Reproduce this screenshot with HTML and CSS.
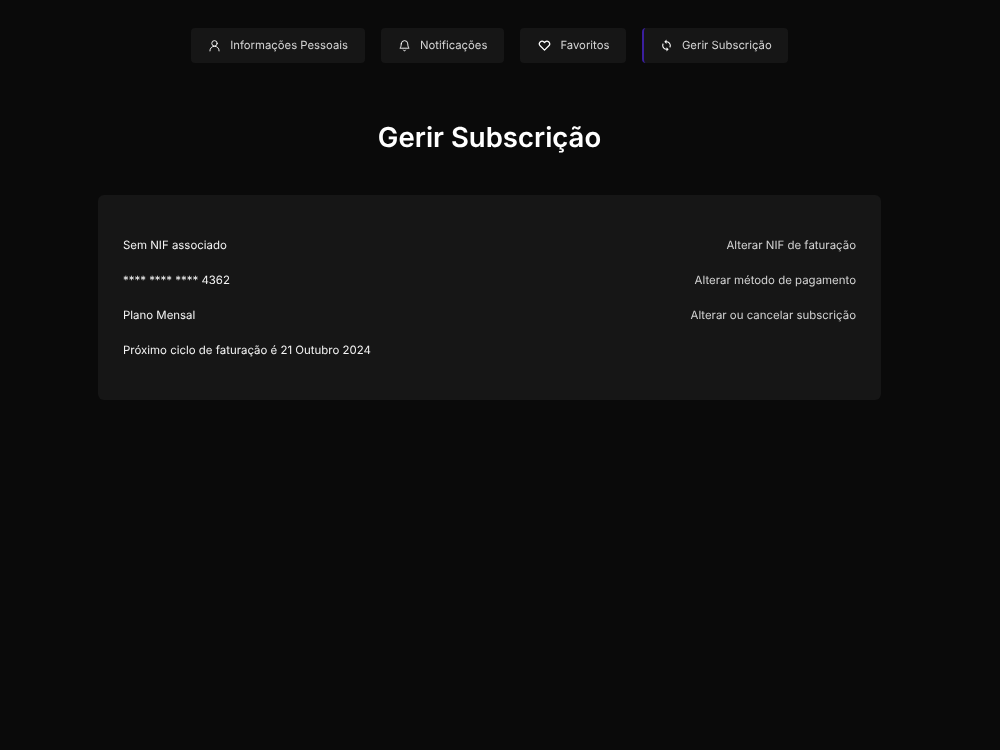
FILE: index.html
```html
<!DOCTYPE html>
<html lang="pt">
<head>
<meta charset="utf-8">
<title>Gerir Subscrição</title>
<link rel="stylesheet" href="styles.css">
</head>
<body>
<div class="page">
  <nav class="tabs">
    <a class="tab tab-first" href="#"><svg class="icon" viewBox="0 0 24 24"><circle cx="12" cy="8" r="5"/><path d="M3.500 22c0-5 3.500-8.500 8.500-8.500s8.500 3.500 8.500 8.500"/></svg>Informações Pessoais</a>
    <a class="tab tab-narrow" href="#"><svg class="icon" viewBox="0 0 24 24"><path d="M6 9a6 6 0 0 1 12 0c0 6 2.500 8 2.500 8h-17S6 15 6 9z"/><path d="M10 20.500a2.200 2.200 0 0 0 4 0"/></svg>Notificações</a>
    <a class="tab tab-wide" href="#"><svg class="icon icon-heart" viewBox="0 0 24 24"><path d="M12 20.500 4 12.500a5 5 0 0 1 0-7 5 5 0 0 1 7 0l1 1 1-1a5 5 0 0 1 7 0 5 5 0 0 1 0 7z"/></svg>Favoritos</a>
    <a class="tab tab-active" href="#"><svg class="icon icon-solid" viewBox="0 0 24 24"><path d="M12 4V1L8 5l4 4V6c3.310 0 6 2.690 6 6 0 1.010-.25 1.970-.7 2.800l1.460 1.460C19.540 15.030 20 13.570 20 12c0-4.420-3.580-8-8-8zm0 14c-3.310 0-6-2.690-6-6 0-1.010.25-1.970.7-2.800L5.240 7.740C4.460 8.970 4 10.430 4 12c0 4.420 3.580 8 8 8v3l4-4-4-4v3z"/></svg>Gerir Subscrição</a>
  </nav>
  <h1 class="title">Gerir Subscrição</h1>
  <section class="card">
    <div class="col">
      <p>Sem NIF associado</p>
      <p>**** **** **** 4362</p>
      <p>Plano Mensal</p>
      <p>Próximo ciclo de faturação é 21 Outubro 2024</p>
    </div>
    <div class="col col-right">
      <a href="#">Alterar NIF de faturação</a>
      <a href="#">Alterar método de pagamento</a>
      <a href="#">Alterar ou cancelar subscrição</a>
    </div>
  </section>
</div>
</body>
</html>
```
FILE: styles.css
```css
* { box-sizing: border-box; }
html, body { margin: 0; height: 100%; }
body {
  background: #0a0a0a;
  color: #f4f4f4;
  font-family: Inter, "Liberation Sans", sans-serif;
  font-size: 11.450px;
  line-height: 15px;
  text-rendering: geometricPrecision;
  overflow: hidden;
}
.page { width: 979px; height: 750px; padding-top: 28px; will-change: transform; }
.tabs { display: flex; justify-content: center; gap: 16px; }
.tab {
  display: flex;
  align-items: center;
  gap: 9px;
  height: 35px;
  padding: 0 16.500px 0 17.500px;
  border-radius: 4px;
  background: #161616;
  color: #d4d4d4;
  font-size: 11.320px;
  text-decoration: none;
}
.tab-first { padding-right: 17.500px; }
.tab-narrow { padding-left: 16.500px; }
.tab-wide { padding-left: 18.500px; }
.tab-active { border-left: 2px solid #3b1f9e; padding-left: 16px; }
.icon {
  width: 13px;
  height: 13px;
  fill: none;
  stroke: #fff;
  stroke-width: 1.700;
  stroke-linecap: round;
  stroke-linejoin: round;
  flex: none;
}
.icon-heart { stroke-width: 2.300; }
.icon-solid { fill: #fff; stroke: none; }
.title {
  margin: 57px 0 41px;
  text-align: center;
  font-size: 27.500px;
  line-height: 34px;
  font-weight: 600;
  color: #fff;
}
.card {
  display: flex;
  justify-content: space-between;
  margin: 0 98px;
  padding: 43.200px 25px 0;
  height: 205px;
  border-radius: 6px;
  background: #161616;
}
.col { display: flex; flex-direction: column; gap: 19.800px; }
.col p { margin: 0; }
.col-right { text-align: right; }
.col-right a { color: #d4d4d4; text-decoration: none; }
```
